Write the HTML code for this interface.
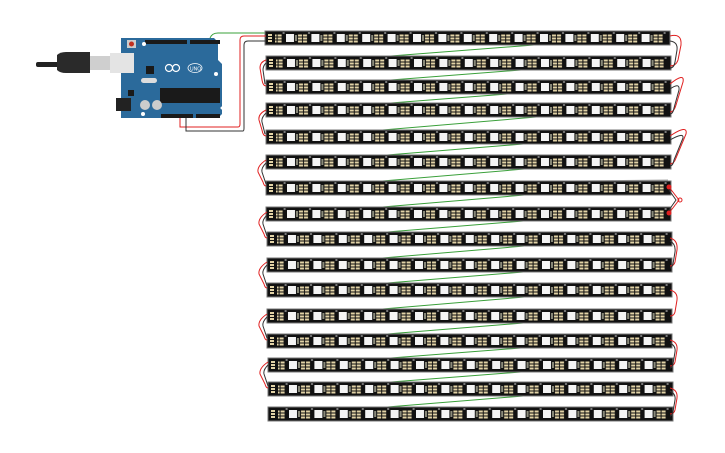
<!DOCTYPE html>
<html><head><meta charset="utf-8"><style>html,body{margin:0;padding:0;background:#fff;overflow:hidden}svg{display:block}</style></head>
<body>
<svg width="725" height="453" viewBox="0 0 725 453" xmlns="http://www.w3.org/2000/svg">
<defs>
<pattern id="led" x="275" y="0" width="25.4" height="14" patternUnits="userSpaceOnUse">
<rect x="0" y="3" width="8" height="8" fill="#f4f4f4"/>
<rect x="9" y="4" width="2" height="6" fill="#8a8a7a"/>
<rect x="12" y="3.5" width="4" height="2" fill="#e2d3a6"/><rect x="17" y="3.5" width="4" height="2" fill="#e2d3a6"/>
<rect x="12" y="6.5" width="4" height="2" fill="#e2d3a6"/><rect x="17" y="6.5" width="4" height="2" fill="#e2d3a6"/>
<rect x="12" y="9.5" width="4" height="2" fill="#e2d3a6"/><rect x="17" y="9.5" width="4" height="2" fill="#e2d3a6"/>
<rect x="22" y="1.5" width="2" height="1" fill="#ddd"/>
</pattern>
<g id="strip">
<rect x="0" y="0" width="405" height="14" fill="#111" stroke="#777" stroke-width="1"/>
<rect x="3" y="3" width="4" height="2" fill="#e2d3a6"/><rect x="3" y="6" width="4" height="2" fill="#e2d3a6"/><rect x="3" y="9" width="4" height="2" fill="#e2d3a6"/>
<rect x="10" y="0" width="392" height="14" fill="url(#led)"/>
</g>
</defs>
<!-- green wires -->
<g stroke="#3aa03a" stroke-width="1" fill="none">
<path d="M210 38 Q212 33 218 33 L266 33"/>
<line x1="300" y1="63" x2="560" y2="43"/>
<line x1="300" y1="87" x2="560" y2="67"/>
<line x1="300" y1="110" x2="560" y2="90"/>
<line x1="300" y1="137" x2="560" y2="115"/>
<line x1="300" y1="162" x2="560" y2="141"/>
<line x1="300" y1="188" x2="560" y2="166"/>
<line x1="300" y1="214" x2="560" y2="192"/>
<line x1="300" y1="239" x2="560" y2="218"/>
<line x1="300" y1="265" x2="560" y2="243"/>
<line x1="300" y1="290" x2="560" y2="269"/>
<line x1="300" y1="316" x2="560" y2="294"/>
<line x1="300" y1="341" x2="560" y2="320"/>
<line x1="300" y1="365" x2="560" y2="345"/>
<line x1="300" y1="389" x2="560" y2="369"/>
<line x1="300" y1="414" x2="560" y2="393"/>
</g>
<g stroke="#aaa" stroke-width="1" fill="none">
<line x1="270" y1="184" x2="668" y2="180"/>
</g>
<!-- strips -->
<use href="#strip" x="265" y="31"/>
<use href="#strip" x="266" y="56"/>
<use href="#strip" x="266" y="80"/>
<use href="#strip" x="266" y="103"/>
<use href="#strip" x="266" y="130"/>
<use href="#strip" x="266" y="155"/>
<use href="#strip" x="266" y="181"/>
<use href="#strip" x="266" y="207"/>
<use href="#strip" x="267" y="232"/>
<use href="#strip" x="267" y="258"/>
<use href="#strip" x="267" y="283"/>
<use href="#strip" x="267" y="309"/>
<use href="#strip" x="267" y="334"/>
<use href="#strip" x="268" y="358"/>
<use href="#strip" x="268" y="382"/>
<use href="#strip" x="268" y="407"/>
<!-- right-side loops -->
<g fill="none" stroke-width="1">
<path d="M670 36 Q682 33 681 45 L678 60 Q676 66 670 66" stroke="#e02020"/>
<path d="M670 41 Q678 42 677 50 L675 62 Q674 68 670 68" stroke="#333"/>
<path d="M670 84 Q685 72 683 82 L676 105 Q674 112 670 112" stroke="#e02020"/>
<path d="M670 89 Q680 82 679 90 L674 108 Q673 114 670 114" stroke="#333"/>
<path d="M670 136 Q688 124 686 134 L676 158 Q674 164 670 164" stroke="#e02020"/>
<path d="M670 140 Q684 132 683 138 L674 160 Q673 166 670 166" stroke="#333"/>
<path d="M669 187 L679 200 L669 213" stroke="#e02020"/>
<path d="M669 190 L676 200 L669 210" stroke="#333"/>
<path d="M670 238 Q678 240 677 250 L675 262 Q674 266 670 266" stroke="#e02020"/>
<path d="M670 241 Q676 244 675 252 L673 264 Q672 268 670 268" stroke="#333"/>
<path d="M670 290 Q678 292 677 300 L675 312 Q674 316 670 316" stroke="#e02020"/>
<path d="M670 340 Q678 342 677 350 L675 362 Q674 366 670 366" stroke="#e02020"/>
<path d="M670 343 Q676 346 675 352 L673 364 Q672 368 670 368" stroke="#333"/>
<path d="M670 388 Q678 390 677 398 L675 410 Q674 414 670 414" stroke="#e02020"/>
<path d="M670 391 Q676 394 675 400 L673 412 Q672 416 670 416" stroke="#333"/>
</g>
<circle cx="669" cy="187" r="2.5" fill="#e02020"/><circle cx="669" cy="213" r="2.5" fill="#e02020"/>
<circle cx="680" cy="200" r="2" fill="none" stroke="#e02020"/>
<!-- left-side loops -->
<g fill="none" stroke-width="1">
<path d="M266 60 Q260 62 260 68 L262 80 Q263 86 266 86" stroke="#e02020"/>
<path d="M266 63 Q263 66 263 70 L265 84" stroke="#333"/>
<path d="M266 110 Q258 114 259 120 L262 130 Q263 136 266 136" stroke="#e02020"/>
<path d="M266 113 Q261 118 262 122 L265 134" stroke="#333"/>
<path d="M266 160 Q257 166 258 172 L263 182 Q264 186 266 186" stroke="#e02020"/>
<path d="M266 163 Q261 168 262 172 L266 184" stroke="#333"/>
<path d="M267 212 Q258 218 259 224 L264 234 Q265 238 267 238" stroke="#e02020"/>
<path d="M267 215 Q262 220 263 224 L267 236" stroke="#333"/>
<path d="M267 262 Q258 268 259 274 L264 284 Q265 288 267 288" stroke="#e02020"/>
<path d="M267 265 Q262 270 263 274 L267 286" stroke="#333"/>
<path d="M267 314 Q258 320 259 326 L264 336 Q265 340 267 340" stroke="#e02020"/>
<path d="M267 317 Q262 322 263 326 L267 338" stroke="#333"/>
<path d="M268 362 Q259 368 260 374 L265 384 Q266 388 268 388" stroke="#e02020"/>
<path d="M268 365 Q263 370 264 374 L268 386" stroke="#333"/>
</g>
<!-- arduino power wires -->
<path d="M180 113 L180 127 L238 127 Q240 127 240 124 L240 40 Q240 36 244 36 L266 36" fill="none" stroke="#e02020" stroke-width="1"/>
<path d="M186 113 L186 131 L243 131 Q244 131 244 128 L244 45 Q244 41 248 41 L266 41" fill="none" stroke="#333" stroke-width="1"/>
<!-- USB cable -->
<rect x="36" y="62" width="24" height="5" rx="2" fill="#222"/>
<path d="M57 55 Q60 52 66 52 L90 52 L90 73 L66 73 Q60 73 57 70 Z" fill="#2a2a2a"/>
<rect x="90" y="56" width="22" height="14" fill="#cfcfcf"/>
<!-- Arduino board -->
<path d="M121 38 L214 38 L218 42 L218 60 L222 64 L222 114 L218 118 L121 118 Z" fill="#2b6a9b"/>
<rect x="110" y="53" width="24" height="20" fill="#e4e4e4"/>
<rect x="127" y="40" width="9" height="8" fill="#ccc"/><circle cx="131.5" cy="44" r="2.5" fill="#c03020"/>
<rect x="145" y="40" width="42" height="4" fill="#1a1a1a"/>
<rect x="190" y="40" width="30" height="4" fill="#1a1a1a"/>
<rect x="160" y="88" width="60" height="15" fill="#1a1a1a"/>
<rect x="161" y="114" width="32" height="4" fill="#1a1a1a"/>
<rect x="196" y="114" width="24" height="4" fill="#1a1a1a"/>
<rect x="146" y="66" width="8" height="8" fill="#1a1a1a"/>
<rect x="116" y="98" width="15" height="13" fill="#222"/>
<circle cx="145" cy="105" r="5" fill="#ccc"/><circle cx="157" cy="105" r="5" fill="#ccc"/>
<rect x="141" y="78" width="16" height="5" rx="2.5" fill="#ddd"/>
<rect x="128" y="90" width="6" height="6" fill="#1a1a1a"/>
<circle cx="169" cy="68" r="3.5" fill="none" stroke="#fff" stroke-width="1.2"/><circle cx="176" cy="68" r="3.5" fill="none" stroke="#fff" stroke-width="1.2"/>
<ellipse cx="195" cy="68" rx="7" ry="4.5" fill="none" stroke="#fff" stroke-width="0.8"/>
<text x="190" y="70.5" font-family="Liberation Sans, sans-serif" font-size="5" fill="#fff">UNO</text>
<circle cx="144" cy="44" r="2" fill="#fff"/><circle cx="216" cy="74" r="2" fill="#fff"/><circle cx="143" cy="114" r="2" fill="#fff"/><circle cx="222" cy="108" r="1.5" fill="#fff"/>
</svg>
</body></html>
